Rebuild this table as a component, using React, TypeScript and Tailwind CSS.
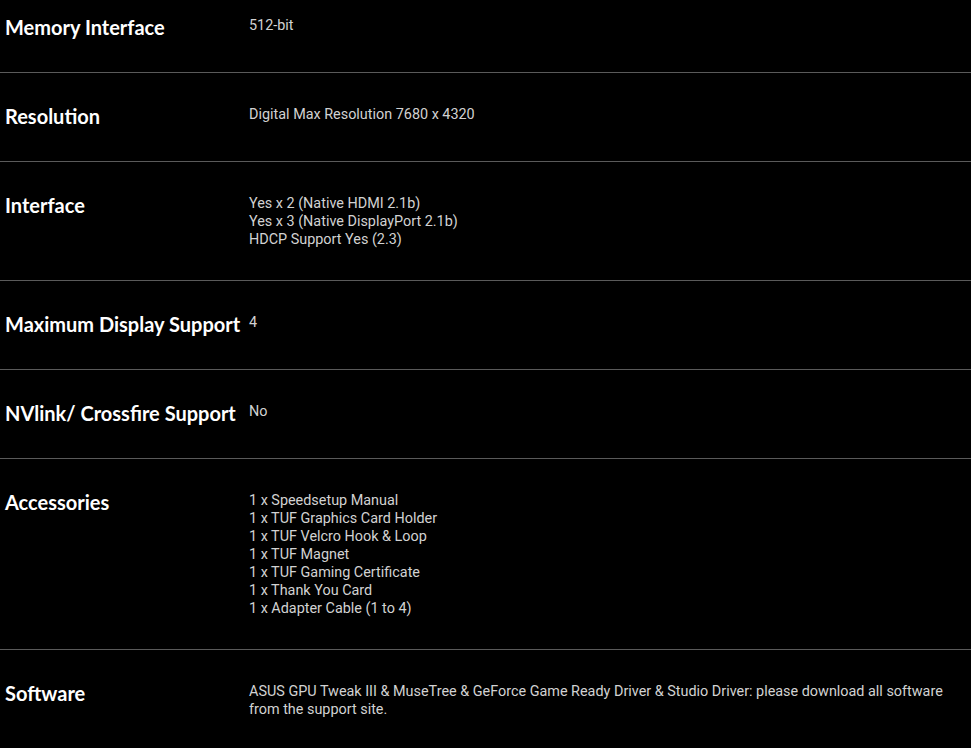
const specs: { label: string; lines: string[] }[] = [
  { label: 'Memory Interface', lines: ['512-bit'] },
  { label: 'Resolution', lines: ['Digital Max Resolution 7680 x 4320'] },
  {
    label: 'Interface',
    lines: ['Yes x 2 (Native HDMI 2.1b)', 'Yes x 3 (Native DisplayPort 2.1b)', 'HDCP Support Yes (2.3)'],
  },
  { label: 'Maximum Display Support', lines: ['4'] },
  { label: 'NVlink/ Crossfire Support', lines: ['No'] },
  {
    label: 'Accessories',
    lines: [
      '1 x Speedsetup Manual',
      '1 x TUF Graphics Card Holder',
      '1 x TUF Velcro Hook & Loop',
      '1 x TUF Magnet',
      '1 x TUF Gaming Certificate',
      '1 x Thank You Card',
      '1 x Adapter Cable (1 to 4)',
    ],
  },
  {
    label: 'Software',
    lines: [
      'ASUS GPU Tweak III & MuseTree & GeForce Game Ready Driver & Studio Driver: please download all software from the support site.',
    ],
  },
];

export default function App() {
  return (
    <div className="w-full h-[748px] overflow-hidden bg-black">
      <div className="-mt-[16px]">
        {specs.map((s) => (
          <div key={s.label} className="flex items-start pt-[31px] pb-[33px] border-b border-[#5a5a5a] pl-[5px] pr-[20px]">
            <div className="min-w-[244px] pr-[5px] text-[20px] leading-[24px] font-bold text-white font-['Lato','Noto_Sans',sans-serif]">
              {s.label}
            </div>
            <div className="mt-[2px] -mb-[2px] text-[14.4px] leading-[18px] text-[#d2d2d2] font-['Roboto','Liberation_Sans',sans-serif] max-w-[700px]">
              {s.lines.map((l) => (
                <div key={l}>{l}</div>
              ))}
            </div>
          </div>
        ))}
      </div>
    </div>
  );
}
